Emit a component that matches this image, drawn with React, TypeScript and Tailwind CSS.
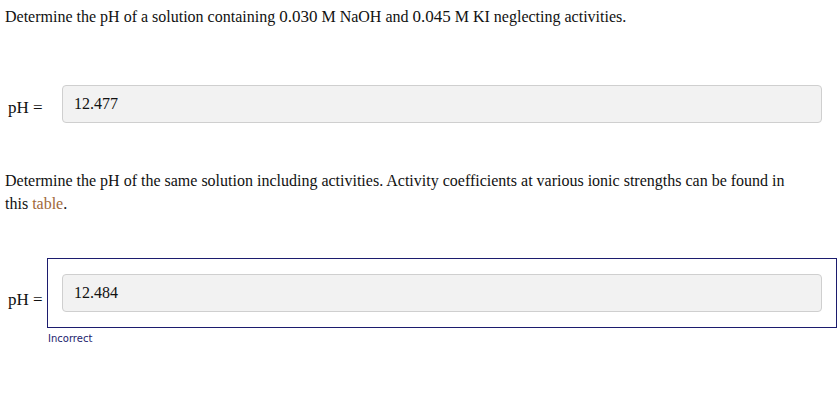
export default function App() {
	return (
		<div className="w-[838px] h-[412px] bg-white text-[#111111] font-[family-name:'Liberation_Serif',serif] text-[16px] overflow-hidden">
			<p className="pl-[5px] pt-[5px] leading-[23px]">
				Determine the pH of a solution containing <span className="text-[17px]">0.030</span> M NaOH and{' '}
				<span className="text-[17px]">0.045</span> M KI neglecting activities.
			</p>

			<div className="flex items-center mt-[57px] h-[38px]">
				<span className="w-[62px] pl-[8px] pt-[8px] text-[17px]">pH =</span>
				<div className="w-[760px] h-[38px] rounded-[4px] border border-[#cfcfcf] bg-[#f2f2f2] px-[11px] pt-[6px]">
					12.477
				</div>
			</div>

			<p className="pl-[5px] pr-[40px] mt-[46px] leading-[23px]">
				Determine the pH of the same solution including activities. Activity coefficients at various ionic strengths can be found in
				this <span className="text-[#a0683a]">table</span>.
			</p>

			<div className="flex items-center mt-[43px]">
				<span className="w-[47px] pl-[8px] pt-[14px] text-[17px]">pH =</span>
				<div className="w-[790px] border-[1.5px] border-[#1c1c6e] px-[14px] py-[15px]">
					<div className="w-[760px] h-[38px] rounded-[4px] border border-[#cfcfcf] bg-[#f2f2f2] px-[11px] pt-[6px]">
						12.484
					</div>
				</div>
			</div>
			<div className="pl-[48px] pt-[3px] text-[10px] text-[#1c1c6e] font-[family-name:'DejaVu_Sans',sans-serif]">Incorrect</div>
		</div>
	);
}
